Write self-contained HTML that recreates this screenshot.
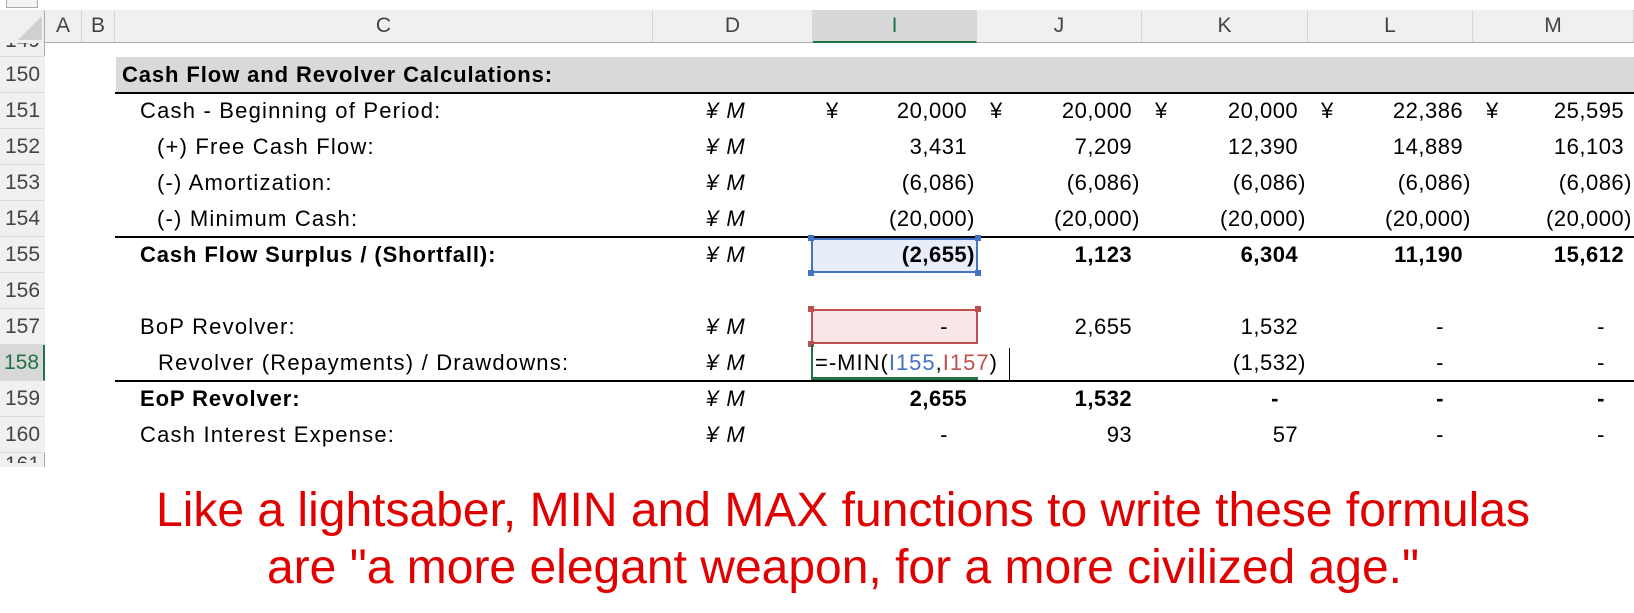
<!DOCTYPE html>
<html><head><meta charset="utf-8"><style>
body{margin:0;width:1634px;height:613px;background:#fff;position:relative;overflow:hidden;font-family:"Liberation Sans","Noto Sans CJK JP",sans-serif;}
.a{position:absolute;white-space:nowrap;}
.t{font-size:22px;color:#000;line-height:36px;letter-spacing:1.2px;}
.b{font-weight:bold;letter-spacing:0.9px;}
.hd{position:absolute;top:10px;height:33px;background:#f0f0f0;border-bottom:1px solid #ababab;box-sizing:border-box;}
.hc{position:absolute;top:10px;height:32px;line-height:32px;text-align:center;font-size:21px;color:#444;border-right:1px solid #d6d6d6;box-sizing:border-box;}
.rn{position:absolute;left:0;width:45px;height:36px;line-height:36px;text-align:center;font-size:21px;color:#444;background:#f0f0f0;border-bottom:1px solid #dadada;box-sizing:border-box;}
.n{position:absolute;text-align:right;font-size:22px;line-height:36px;letter-spacing:0.5px;}
.h{visibility:hidden;}
.ym{position:absolute;left:706px;font-size:22px;line-height:36px;font-style:italic;letter-spacing:1px;}
.ln{position:absolute;height:2px;background:#000;left:115px;right:0;}
.msg{position:absolute;left:0;width:1686px;text-align:center;color:#e00000;font-size:48px;line-height:56px;}
</style></head><body>
<div class="a" style="left:6px;top:-12px;width:30px;height:18px;border:1px solid #aaa;background:#f4f4f4"></div>
<div class="hd" style="left:0;width:1634px"></div>
<div class="a" style="left:0;top:10px;width:45px;height:457px;background:#f0f0f0;border-right:1px solid #ababab;box-sizing:border-box"></div>
<svg class="a" style="left:18px;top:16px" width="24" height="24"><polygon points="24,0 24,24 0,24" fill="#d0d0d0"/></svg>
<div class="hc" style="left:45px;width:37px">A</div>
<div class="hc" style="left:82px;width:33px">B</div>
<div class="hc" style="left:115px;width:538px">C</div>
<div class="hc" style="left:653px;width:160px">D</div>
<div class="hc" style="left:813px;width:164px;color:#217346;background:#d8d8d8;border-bottom:2px solid #217346;height:33px">I</div>
<div class="hc" style="left:977px;width:165px">J</div>
<div class="hc" style="left:1142px;width:166px">K</div>
<div class="hc" style="left:1308px;width:165px">L</div>
<div class="hc" style="left:1473px;width:161px">M</div>
<div class="a" style="left:0;top:43px;width:45px;height:14px;overflow:hidden;border-bottom:1px solid #dadada;box-sizing:border-box"><div style="font-size:21px;color:#444;text-align:center;margin-top:-14px">149</div></div>
<div class="rn" style="top:57px">150</div><div class="rn" style="top:93px">151</div><div class="rn" style="top:129px">152</div><div class="rn" style="top:165px">153</div><div class="rn" style="top:201px">154</div><div class="rn" style="top:237px">155</div><div class="rn" style="top:273px">156</div><div class="rn" style="top:309px">157</div><div class="rn" style="top:345px;color:#217346;border-right:2px solid #217346;background:#d8d8d8">158</div><div class="rn" style="top:381px">159</div><div class="rn" style="top:417px">160</div>
<div class="a" style="left:0;top:453px;width:45px;height:10px;overflow:hidden"><div style="font-size:21px;color:#444;text-align:center;">161</div></div>

<div class="a" style="left:116px;top:57px;width:1518px;height:36px;background:#d9d9d9"></div>
<div class="ln" style="top:92px"></div>
<div class="ln" style="top:236px"></div>
<div class="ln" style="top:380px"></div>

<div class="a" style="left:811px;top:238px;width:167px;height:35px;background:#e8eef9;border:2px solid #4472c4;box-sizing:border-box"></div>
<div class="a" style="left:808px;top:235px;width:6px;height:6px;background:#4472c4"></div><div class="a" style="left:975px;top:235px;width:6px;height:6px;background:#4472c4"></div><div class="a" style="left:808px;top:270px;width:6px;height:6px;background:#4472c4"></div><div class="a" style="left:975px;top:270px;width:6px;height:6px;background:#4472c4"></div>
<div class="a" style="left:811px;top:309px;width:167px;height:35px;background:#f9e6e6;border:2px solid #c0504d;box-sizing:border-box"></div>
<div class="a" style="left:808px;top:306px;width:6px;height:6px;background:#c0504d"></div><div class="a" style="left:975px;top:306px;width:6px;height:6px;background:#c0504d"></div><div class="a" style="left:808px;top:341px;width:6px;height:6px;background:#c0504d"></div>
<div class="a" style="left:811px;top:344px;width:167px;height:36px;border-left:2px solid #217346;border-bottom:3px solid #217346;box-sizing:border-box"></div>
<div class="a" style="left:1009px;top:348px;width:1px;height:32px;background:#000"></div>

<div class="a t b" style="left:122px;top:57px">Cash Flow and Revolver Calculations:</div>
<div class="a t" style="left:140px;top:93px">Cash - Beginning of Period:</div>
<div class="a t" style="left:157px;top:129px">(+) Free Cash Flow:</div>
<div class="a t" style="left:157px;top:165px">(-) Amortization:</div>
<div class="a t" style="left:157px;top:201px">(-) Minimum Cash:</div>
<div class="a t b" style="left:140px;top:237px">Cash Flow Surplus / (Shortfall):</div>
<div class="a t" style="left:140px;top:309px">BoP Revolver:</div>
<div class="a t" style="left:158px;top:345px">Revolver (Repayments) / Drawdowns:</div>
<div class="a t b" style="left:140px;top:381px">EoP Revolver:</div>
<div class="a t" style="left:140px;top:417px">Cash Interest Expense:</div>

<div class="ym" style="top:93px">¥ M</div><div class="ym" style="top:129px">¥ M</div><div class="ym" style="top:165px">¥ M</div><div class="ym" style="top:201px">¥ M</div><div class="ym" style="top:237px">¥ M</div><div class="ym" style="top:309px">¥ M</div><div class="ym" style="top:345px">¥ M</div><div class="ym" style="top:381px">¥ M</div><div class="ym" style="top:417px">¥ M</div>

<div class="a t" style="left:826px;top:93px">¥</div>
<div class="a t" style="left:990px;top:93px">¥</div>
<div class="a t" style="left:1155px;top:93px">¥</div>
<div class="a t" style="left:1321px;top:93px">¥</div>
<div class="a t" style="left:1486px;top:93px">¥</div>

<div class="n" style="right:659px;top:93px">20,000<span class="h">)</span></div>
<div class="n" style="right:494px;top:93px">20,000<span class="h">)</span></div>
<div class="n" style="right:328px;top:93px">20,000<span class="h">)</span></div>
<div class="n" style="right:163px;top:93px">22,386<span class="h">)</span></div>
<div class="n" style="right:2px;top:93px">25,595<span class="h">)</span></div>

<div class="n" style="right:659px;top:129px">3,431<span class="h">)</span></div>
<div class="n" style="right:494px;top:129px">7,209<span class="h">)</span></div>
<div class="n" style="right:328px;top:129px">12,390<span class="h">)</span></div>
<div class="n" style="right:163px;top:129px">14,889<span class="h">)</span></div>
<div class="n" style="right:2px;top:129px">16,103<span class="h">)</span></div>

<div class="n" style="right:659px;top:165px">(6,086)</div>
<div class="n" style="right:494px;top:165px">(6,086)</div>
<div class="n" style="right:328px;top:165px">(6,086)</div>
<div class="n" style="right:163px;top:165px">(6,086)</div>
<div class="n" style="right:2px;top:165px">(6,086)</div>

<div class="n" style="right:659px;top:201px">(20,000)</div>
<div class="n" style="right:494px;top:201px">(20,000)</div>
<div class="n" style="right:328px;top:201px">(20,000)</div>
<div class="n" style="right:163px;top:201px">(20,000)</div>
<div class="n" style="right:2px;top:201px">(20,000)</div>

<div class="n b" style="right:659px;top:237px">(2,655)</div>
<div class="n b" style="right:494px;top:237px">1,123<span class="h">)</span></div>
<div class="n b" style="right:328px;top:237px">6,304<span class="h">)</span></div>
<div class="n b" style="right:163px;top:237px">11,190<span class="h">)</span></div>
<div class="n b" style="right:2px;top:237px">15,612<span class="h">)</span></div>

<div class="n" style="right:686px;top:309px">-</div>
<div class="n" style="right:494px;top:309px">2,655<span class="h">)</span></div>
<div class="n" style="right:328px;top:309px">1,532<span class="h">)</span></div>
<div class="n" style="right:190px;top:309px">-</div>
<div class="n" style="right:29px;top:309px">-</div>

<div class="a t" style="left:815px;top:345px;letter-spacing:1px">=-MIN(<span style="color:#4472c4">I155</span>,<span style="color:#c0504d">I157</span>)</div>
<div class="n" style="right:328px;top:345px">(1,532)</div>
<div class="n" style="right:190px;top:345px">-</div>
<div class="n" style="right:29px;top:345px">-</div>

<div class="n b" style="right:659px;top:381px">2,655<span class="h">)</span></div>
<div class="n b" style="right:494px;top:381px">1,532<span class="h">)</span></div>
<div class="n b" style="right:355px;top:381px">-</div>
<div class="n b" style="right:190px;top:381px">-</div>
<div class="n b" style="right:29px;top:381px">-</div>

<div class="n" style="right:686px;top:417px">-</div>
<div class="n" style="right:494px;top:417px">93<span class="h">)</span></div>
<div class="n" style="right:328px;top:417px">57<span class="h">)</span></div>
<div class="n" style="right:190px;top:417px">-</div>
<div class="n" style="right:29px;top:417px">-</div>

<div class="msg" style="top:483px">Like a lightsaber, MIN and MAX functions to write these formulas</div>
<div class="msg" style="top:540px">are "a more elegant weapon, for a more civilized age."</div>
</body></html>
